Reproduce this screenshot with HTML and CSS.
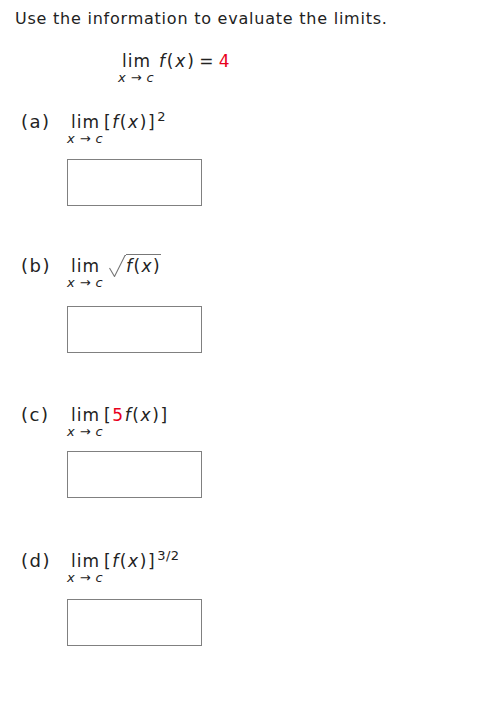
FILE: index.html
```html
<!DOCTYPE html>
<html>
<head>
<meta charset="utf-8">
<link rel="stylesheet" href="styles.css">
</head>
<body>
<div class="page">
  <p class="title">Use the information to evaluate the limits.</p>

  <div class="given">
    <span class="lim"><span class="lim-word">lim</span><span class="under"><i>x</i> → <i>c</i></span></span><span class="given-body"><span class="fx"><i>f</i>(<i>x</i></span>) = <span class="red">4</span></span>
  </div>

  <div class="part part-a">
    <div class="expr"><span class="label">(a)</span><span class="lim"><span class="lim-word">lim</span><span class="under"><i>x</i> → <i>c</i></span></span><span class="body">[<i>f</i>(<i>x</i>)]<sup>2</sup></span></div>
    <div class="answer"></div>
  </div>

  <div class="part part-b">
    <div class="expr"><span class="label">(b)</span><span class="lim"><span class="lim-word">lim</span><span class="under"><i>x</i> → <i>c</i></span></span><span class="body"><span class="sqrt"><svg class="radical" width="17" height="22" viewBox="0 0 17 22"><polyline points="0.5,13 5.5,21.5 16,0.5 17,0.5" fill="none" stroke="#777" stroke-width="1.1"/></svg><span class="radicand"><i>f</i>(<i>x</i>)</span></span></span></div>
    <div class="answer"></div>
  </div>

  <div class="part part-c">
    <div class="expr"><span class="label">(c)</span><span class="lim"><span class="lim-word">lim</span><span class="under"><i>x</i> → <i>c</i></span></span><span class="body">[<span class="red">5</span><i>f</i>(<i>x</i>)]</span></div>
    <div class="answer"></div>
  </div>

  <div class="part part-d">
    <div class="expr"><span class="label">(d)</span><span class="lim"><span class="lim-word">lim</span><span class="under"><i>x</i> → <i>c</i></span></span><span class="body">[<i>f</i>(<i>x</i>)]<sup>3/2</sup></span></div>
    <div class="answer"></div>
  </div>
</div>
</body>
</html>
```

FILE: styles.css
```css
html, body {
  margin: 0;
  padding: 0;
  background: #ffffff;
}

body {
  font-family: "DejaVu Sans", Verdana, sans-serif;
  color: #222222;
}

.page {
  padding: 8px 0 0 15px;
}

.title {
  margin: 0;
  font-size: 16px;
  line-height: 22px;
  letter-spacing: 0.77px;
}

.given {
  margin: 21px 0 0 103px;
  font-size: 17px;
  line-height: 20px;
  white-space: nowrap;
}

.lim {
  display: inline-flex;
  flex-direction: column;
  align-items: center;
  vertical-align: baseline;
}

.lim-word {
  line-height: 20px;
  letter-spacing: 1px;
  padding-left: 1px;
}

.under {
  font-size: 13px;
  line-height: 13px;
  letter-spacing: 0.4px;
  white-space: nowrap;
}

.body {
  letter-spacing: 1.6px;
  margin-left: 1px;
}

.given-body {
  margin-left: 5px;
}

.fx {
  letter-spacing: 1.8px;
}

.red {
  color: #e8001c;
}

.part {
  font-size: 17px;
}

.part-a { margin-top: 28px; }
.part-b { margin-top: 50px; }
.part-c { margin-top: 52px; }
.part-d { margin-top: 53px; }

.expr {
  line-height: 20px;
  padding-left: 6px;
  white-space: nowrap;
}

.label {
  display: inline-block;
  width: 46px;
  font-size: 18px;
  letter-spacing: 1.5px;
}

sup {
  font-size: 13px;
  vertical-align: 7px;
  line-height: 0;
  letter-spacing: 0.5px;
  margin-left: 1px;
}

.sqrt {
  white-space: nowrap;
  letter-spacing: 1.4px;
}

.radical {
  vertical-align: -5px;
  margin-top: -3px;
  margin-left: 5px;
}

.radicand {
  border-top: 1px solid #777;
  padding-top: 1px;
  padding-right: 0;
}

.answer {
  width: 133px;
  height: 45px;
  border: 1px solid #808080;
  margin: 14px 0 0 52px;
  background: #fff;
}

.part-b .answer { margin-top: 17px; }
.part-c .answer { margin-top: 13px; }
.part-d .answer { margin-top: 15px; }
```
